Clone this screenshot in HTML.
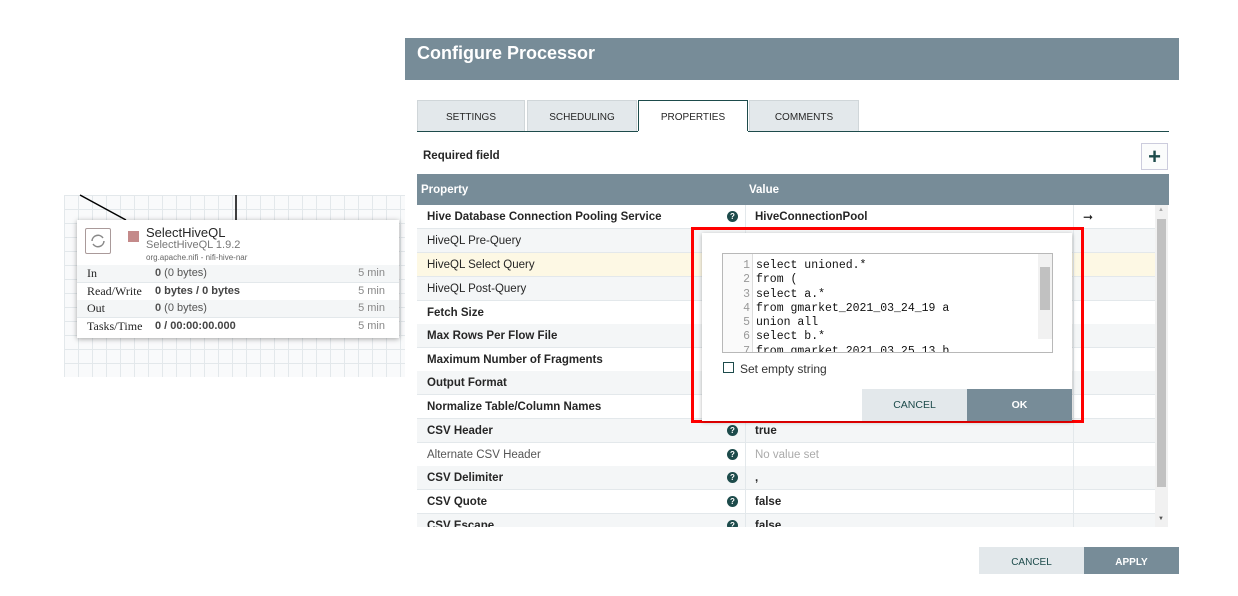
<!DOCTYPE html>
<html><head><style>
*{margin:0;padding:0;box-sizing:border-box}
body{width:1238px;height:596px;background:#fff;position:relative;overflow:hidden;font-family:"Liberation Sans",sans-serif;color:#262626}
.abs{position:absolute}
.grid{left:64px;top:195px;width:341px;height:182px;background-color:#f9fafb;background-image:linear-gradient(#e3e8eb 1px,transparent 1px),linear-gradient(90deg,#e3e8eb 1px,transparent 1px);background-size:14px 14px}
.card{left:77px;top:220px;width:322px;height:118px;background:#fff;box-shadow:0 1px 5px rgba(0,0,0,.35)}
.stat{position:absolute;left:0;width:322px;height:17px;font-size:11px;line-height:17px}
.stat .l{position:absolute;left:10px;font-family:"Liberation Serif",serif;font-size:12px}
.stat .v{position:absolute;left:78px;color:#555}
.stat .t{position:absolute;right:14px;color:#888}
.hdr{left:405px;top:38px;width:774px;height:42px;background:#778c98;color:#fff;font-weight:bold;font-size:18px;padding:5px 12px}
.tab{position:absolute;top:100px;height:32px;background:#e3e8eb;border:1px solid #d0d6d9;font-size:10px;text-align:center;line-height:33px;color:#262626}
.row{position:absolute;left:417px;width:738px;height:24px;font-size:11.5px;line-height:25px;border-bottom:1px solid #e3e8eb}
.row .p{position:absolute;left:10px}
.row .q{position:absolute;left:310px;top:6px;width:11px;height:11px;border-radius:50%;background:#1d4b4b;color:#fff;font-size:8px;line-height:11px;text-align:center;font-weight:bold}
.row .v{position:absolute;left:338px;font-weight:bold}
.row .c1{position:absolute;left:328px;top:0;height:24px;border-left:1px solid #e3e8eb}
.row .c2{position:absolute;left:656px;top:0;height:24px;border-left:1px solid #e3e8eb}
.b{font-weight:bold}
</style></head><body>
<div class="abs grid"></div>
<svg class="abs" style="left:64px;top:190px" width="200" height="40"><line x1="16" y1="5" x2="62" y2="30" stroke="#000" stroke-width="1.5"/><line x1="172" y1="5" x2="172" y2="30" stroke="#000" stroke-width="1.5"/></svg>
<div class="abs card">
 <div class="abs" style="left:8px;top:8px;width:26px;height:26px;border:1.5px solid #aa9a9a;border-radius:2px"></div>
 <svg class="abs" style="left:12px;top:12px" width="18" height="18"><path d="M3 9a6 6 0 0 1 11-3" fill="none" stroke="#888" stroke-width="1.5"/><path d="M15 9a6 6 0 0 1-11 3" fill="none" stroke="#888" stroke-width="1.5"/></svg>
 <div class="abs" style="left:51px;top:11px;width:11px;height:11px;background:#c48a8a"></div>
 <div class="abs" style="left:69px;top:5px;font-size:13px;color:#262626">SelectHiveQL</div>
 <div class="abs" style="left:69px;top:19px;font-size:11px;color:#777">SelectHiveQL 1.9.2</div>
 <div class="abs" style="left:69px;top:33px;font-size:8px;color:#666">org.apache.nifi - nifi-hive-nar</div>
 <div class="stat" style="top:45px;background:#f4f6f7"><span class="l">In</span><span class="v"><b>0</b> (0 bytes)</span><span class="t">5 min</span></div>
 <div class="stat" style="top:62px;border-top:1px solid #e3e8eb"><span class="l">Read/Write</span><span class="v b" style="color:#444">0 bytes / 0 bytes</span><span class="t">5 min</span></div>
 <div class="stat" style="top:80px;background:#f4f6f7"><span class="l">Out</span><span class="v"><b>0</b> (0 bytes)</span><span class="t">5 min</span></div>
 <div class="stat" style="top:97px;border-top:1px solid #e3e8eb"><span class="l">Tasks/Time</span><span class="v b" style="color:#444">0 / 00:00:00.000</span><span class="t">5 min</span></div>
</div>

<div class="abs hdr">Configure Processor</div>
<div class="tab" style="left:417px;width:108px">SETTINGS</div>
<div class="tab" style="left:527px;width:110px">SCHEDULING</div>
<div class="tab" style="left:638px;width:110px;background:#fff;border-color:#1d4b4b;border-bottom:none;height:33px">PROPERTIES</div>
<div class="tab" style="left:749px;width:110px">COMMENTS</div>
<div class="abs" style="left:417px;top:131px;width:752px;border-top:1px solid #1d4b4b"></div>
<div class="abs" style="left:638px;top:131px;width:110px;height:2px;background:#fff"></div>
<div class="abs b" style="left:423px;top:150px;font-size:11.5px">Required field</div>
<div class="abs" style="left:1141px;top:143px;width:27px;height:27px;border:1px solid #ccd;background:#fbfcfc;text-align:center;font-size:22px;line-height:25px;font-weight:bold;color:#1d4b4b">+</div>
<div class="abs" style="left:417px;top:174px;width:752px;height:31px;background:#778c98;color:#fff;font-weight:bold;font-size:11.5px;line-height:33px"><span style="position:absolute;left:4px">Property</span><span style="position:absolute;left:332px">Value</span></div>

<div style="position:absolute;left:0;top:205px;width:1238px;height:322px;overflow:hidden">
<div class="row" style="top:0;background:#fff"><span class="p b">Hive Database Connection Pooling Service</span><span class="q">?</span><span class="c1"></span><span class="v">HiveConnectionPool</span><span class="c2"></span><span style="position:absolute;left:666px;font-size:12px">&#10142;</span></div>
<div class="row" style="top:24px;background:#f4f6f7"><span class="p">HiveQL Pre-Query</span><span class="c1"></span><span class="c2"></span></div>
<div class="row" style="top:48px;background:#fdf8e4"><span class="p">HiveQL Select Query</span><span class="c1"></span><span class="c2"></span></div>
<div class="row" style="top:72px;background:#f4f6f7"><span class="p">HiveQL Post-Query</span><span class="c1"></span><span class="c2"></span></div>
<div class="row" style="top:96px;background:#fff"><span class="p b">Fetch Size</span><span class="c1"></span><span class="c2"></span></div>
<div class="row" style="top:119px;background:#f4f6f7"><span class="p b">Max Rows Per Flow File</span><span class="c1"></span><span class="c2"></span></div>
<div class="row" style="top:143px;background:#fff"><span class="p b">Maximum Number of Fragments</span><span class="c1"></span><span class="c2"></span></div>
<div class="row" style="top:166px;background:#f4f6f7"><span class="p b">Output Format</span><span class="c1"></span><span class="c2"></span></div>
<div class="row" style="top:190px;background:#fff"><span class="p b">Normalize Table/Column Names</span><span class="c1"></span><span class="c2"></span></div>
<div class="row" style="top:214px;background:#f4f6f7"><span class="p b">CSV Header</span><span class="q">?</span><span class="c1"></span><span class="v">true</span><span class="c2"></span></div>
<div class="row" style="top:238px;background:#fff"><span class="p" style="color:#555">Alternate CSV Header</span><span class="q">?</span><span class="c1"></span><span class="v" style="font-weight:normal;color:#aaa">No value set</span><span class="c2"></span></div>
<div class="row" style="top:261px;background:#f4f6f7"><span class="p b">CSV Delimiter</span><span class="q">?</span><span class="c1"></span><span class="v">,</span><span class="c2"></span></div>
<div class="row" style="top:285px;background:#fff"><span class="p b">CSV Quote</span><span class="q">?</span><span class="c1"></span><span class="v">false</span><span class="c2"></span></div>
<div class="row" style="top:309px;background:#f4f6f7"><span class="p b">CSV Escape</span><span class="q">?</span><span class="c1"></span><span class="v">false</span><span class="c2"></span></div>
</div>
<div class="abs" style="left:1155px;top:205px;width:13px;height:322px;background:#f1f1f1"></div>
<div class="abs" style="left:1157px;top:219px;width:9px;height:268px;background:#c1c1c1"></div>
<div class="abs" style="left:1158px;top:207px;font-size:6px;color:#aaa">&#9650;</div>
<div class="abs" style="left:1158px;top:516px;font-size:6px;color:#555">&#9660;</div>

<div class="abs" style="left:979px;top:547px;width:105px;height:27px;background:#e3e8eb;font-size:10px;text-align:center;line-height:31px;color:#1d4b4b">CANCEL</div>
<div class="abs b" style="left:1084px;top:547px;width:95px;height:27px;background:#778c98;font-size:10px;text-align:center;line-height:31px;color:#fff">APPLY</div>

<div class="abs" style="left:691px;top:227px;width:393px;height:196px;border:3px solid #f00"></div>
<div class="abs" style="left:702px;top:233px;width:370px;height:188px;background:#fff;box-shadow:0 1px 4px rgba(0,0,0,.3)"></div>
<div class="abs" style="left:722px;top:253px;width:331px;height:100px;border:1px solid #b8b8b8;background:#fff;overflow:hidden">
 <div class="abs" style="left:0;top:0;width:30px;height:100px;background:#fafafa;border-right:1px solid #ddd"></div>
 <div class="abs" style="left:0;top:5px;width:27px;text-align:right;font-family:'Liberation Mono',monospace;font-size:11.5px;line-height:14.3px;color:#999">1<br>2<br>3<br>4<br>5<br>6<br>7</div>
 <div class="abs" style="left:33px;top:5px;font-family:'Liberation Mono',monospace;font-size:11.5px;line-height:14.3px;color:#111;white-space:pre">select unioned.*
from (
select a.*
from gmarket_2021_03_24_19 a
union all
select b.*
from gmarket_2021_03_25_13 b</div>
 <div class="abs" style="left:315px;top:0;width:15px;height:85px;background:#f1f1f1"></div>
 <div class="abs" style="left:317px;top:13px;width:10px;height:43px;background:#c1c1c1"></div>
</div>
<div class="abs" style="left:723px;top:362px;width:11px;height:11px;border:1.5px solid #1d4b4b"></div>
<div class="abs" style="left:740px;top:362px;font-size:12px;color:#333">Set empty string</div>
<div class="abs" style="left:862px;top:389px;width:105px;height:32px;background:#e3e8eb;font-size:10.5px;text-align:center;line-height:32px;color:#1d4b4b">CANCEL</div>
<div class="abs b" style="left:967px;top:389px;width:105px;height:32px;background:#778c98;font-size:10.5px;text-align:center;line-height:32px;color:#fff">OK</div>
</body></html>
